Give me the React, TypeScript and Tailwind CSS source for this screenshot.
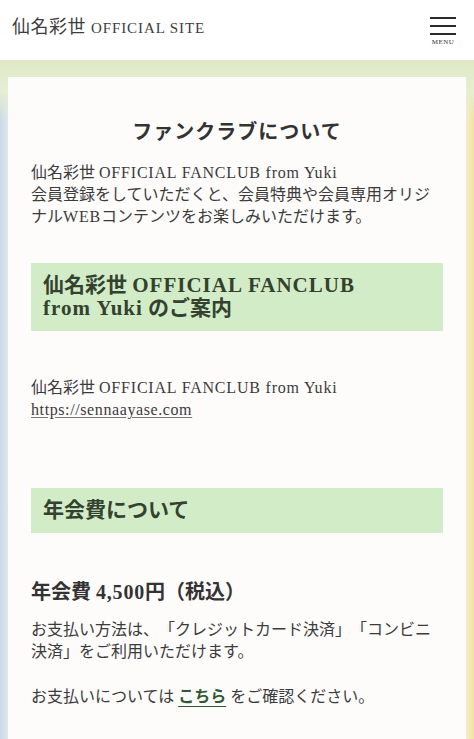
import React from 'react';

const serif = "font-['Liberation_Serif','Noto_Sans_CJK_JP',serif]";

// Latin runs in the reference are a touch wider than Liberation Serif
const L: React.FC<{ children: React.ReactNode; w?: string }> = ({ children, w = 'tracking-[0.8px]' }) => (
  <span className={w}>{children}</span>
);

const Header: React.FC = () => (
  <header className="h-[60px] bg-white flex items-center justify-between pl-3 pr-[18px]">
    <div className="flex items-baseline gap-[5px] text-[#3d3d3d] pb-[6px]">
      <span className="text-[18px] tracking-[0.5px]">仙名彩世</span>
      <span className="text-[15px] tracking-[0.9px]">OFFICIAL SITE</span>
    </div>
    <button className="flex flex-col items-center pt-[3px]">
      <span className="block w-[26px] h-[2.5px] bg-[#2b2b2b]" />
      <span className="block w-[26px] h-[2.5px] bg-[#2b2b2b] mt-[5.5px]" />
      <span className="block w-[26px] h-[2.5px] bg-[#2b2b2b] mt-[5.5px]" />
      <span className="text-[7px] leading-none mt-[4px] tracking-[0.5px] text-[#333]">MENU</span>
    </button>
  </header>
);

const SectionTitle: React.FC<{ children: React.ReactNode }> = ({ children }) => (
  <h2 className="bg-[#d3ecc8] px-3 py-[11px] text-[21px] leading-[23px] font-bold text-[#33422f]">
    {children}
  </h2>
);

export default function App() {
  return (
    <div lang="ja" className={`${serif} [text-spacing-trim:space-all] min-h-[739px] bg-white`}>
      <Header />
      <div className="bg-[linear-gradient(180deg,#dfe9c6_0px,#e6eed2_30px,transparent_60px),linear-gradient(90deg,#cbdae6_0%,#f6f7f1_4%,#fbfaf5_96%,#f2e2a6_100%)] px-2 pt-[17px] pb-10">
        <main className="bg-[#fdfcfb] px-[23px] pt-[41px] pb-10 text-[#3b3b3b]">
          <h1 className="text-center text-[20px] leading-[28px] font-bold text-[#333] tracking-[1px]">
            ファンクラブについて
          </h1>
          <p className="mt-4 text-[16px] leading-[22px]">
            仙名彩世 <L>OFFICIAL FANCLUB from Yuki</L>
            <br />
            <span className="whitespace-nowrap">会員登録をしていただくと、会員特典や会員専用オリジ</span>
            <br />
            ナル<L>WEB</L>コンテンツをお楽しみいただけます。
          </p>

          <div className="mt-[35px]">
            <SectionTitle>
              仙名彩世 <L w="tracking-[1px]">OFFICIAL FANCLUB</L>
              <br />
              <L w="tracking-[1px]">from Yuki</L> のご案内
            </SectionTitle>
          </div>

          <p className="mt-[46px] text-[16px] leading-[22px]">
            仙名彩世 <L>OFFICIAL FANCLUB from Yuki</L>
            <br />
            <a href="#" className="underline underline-offset-2 decoration-[#777] text-[#3b3b3b] tracking-[0.6px]">
              https://sennaayase.com
            </a>
          </p>

          <div className="mt-[67px]">
            <SectionTitle>年会費について</SectionTitle>
          </div>

          <h3 className="mt-[45px] text-[20px] leading-[28px] font-bold text-[#333]">
            年会費 <L w="tracking-[0.8px]">4,500</L>円（税込）
          </h3>
          <p className="mt-[13px] text-[16px] leading-[22px]">
            お支払い方法は、「クレジットカード決済」「コンビニ決済」をご利用いただけます。
          </p>
          <p className="mt-[23px] text-[16px] leading-[22px]">
            お支払いについては{' '}
            <a href="#" className="font-bold text-[#2f5a34] underline underline-offset-4">
              こちら
            </a>{' '}
            をご確認ください。
          </p>
        </main>
      </div>
    </div>
  );
}
